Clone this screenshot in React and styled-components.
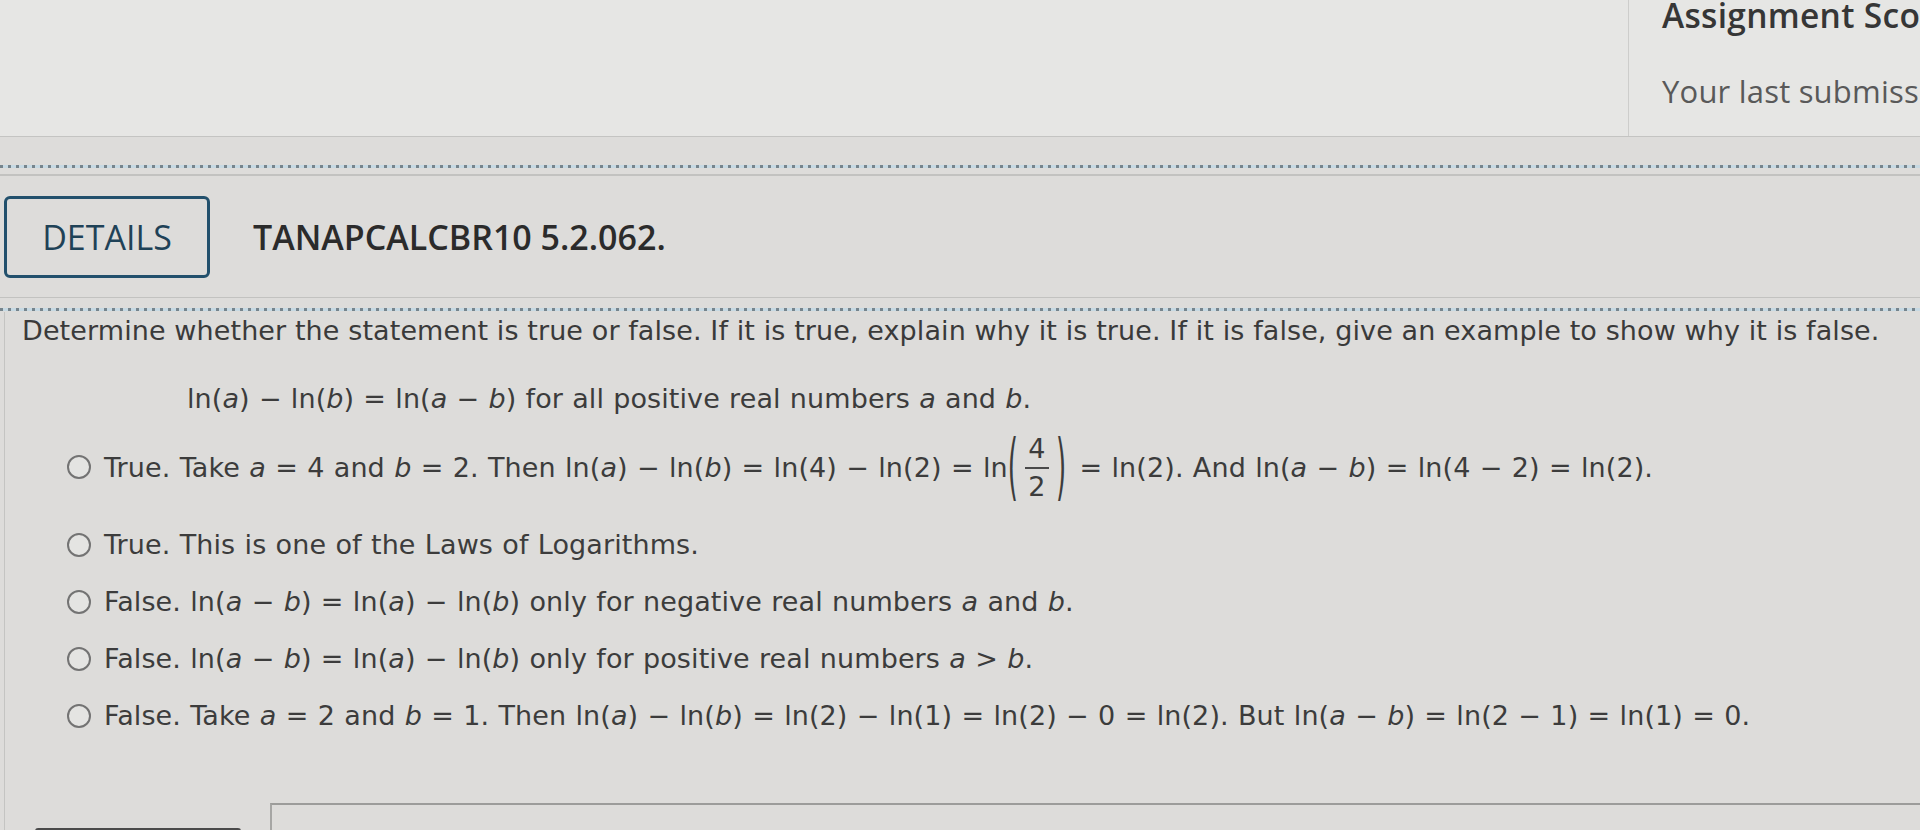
import React from 'react';
import styled, { createGlobalStyle } from 'styled-components';

const GlobalStyle = createGlobalStyle`
  html, body {
    margin: 0;
    padding: 0;
  }
  body {
    width: 1920px;
    height: 830px;
    overflow: hidden;
    background: #dddcda;
    font-family: "DejaVu Sans", Verdana, sans-serif;
    color: #3c3c3c;
  }
`;

const TopBar = styled.header`
    display: flex;
    height: 137px;
    box-sizing: border-box;
    background: #e6e6e4;
    border-bottom: 1px solid #c4c4c2;
`;

const TopLeft = styled.div`
    flex: 0 0 1628px;
    border-right: 1px solid #cdcdcb;
`;

/* the score panel runs past the right edge of the window, as in the page */
const ScorePanel = styled.div`
    flex: 1;
    min-width: 0;
    padding-left: 33px;
    white-space: nowrap;
    overflow: hidden;
    font-family: "Open Sans", "Noto Sans", sans-serif;
`;

const ScoreTitle = styled.div`
    font-size: 33.5px;
    line-height: 30px;
    font-weight: 600;
    letter-spacing: 0.3px;
    color: #363636;
`;

const ScoreNote = styled.div`
    margin-top: 46px;
    font-size: 31px;
    line-height: 30px;
    letter-spacing: 0.2px;
    color: #595959;
`;

const Dots = styled.div`
    height: 3px;
    margin-top: ${p => p.$top || 0}px;
    background: repeating-linear-gradient(90deg, #76848c 0 3px, #c6d9e3 3px 8px);
`;

const HeaderBand = styled.div`
    display: flex;
    align-items: center;
    gap: 43px;
    height: 121px;
    margin-top: 6px;
    padding-left: 4px;
    border-top: 2px solid #c2c2c0;
    border-bottom: 1px solid #c2c2c0;
    font-family: "Open Sans", "Noto Sans", sans-serif;
`;

const DetailsButton = styled.div`
    display: flex;
    align-items: center;
    justify-content: center;
    width: 206px;
    height: 82px;
    box-sizing: border-box;
    border: 3px solid #22506c;
    border-radius: 6px;
    font-size: 34px;
    color: #1f4257;
`;

const ProblemId = styled.div`
    font-size: 34px;
    font-weight: 600;
    color: #2b2b2b;
`;

const Content = styled.section`
    margin-left: 4px;
    padding-left: 17px;
    border-left: 1px solid #c4c4c2;
    font-size: 27px;
    letter-spacing: 0.1px;
`;

const Question = styled.p`
    margin: 1px 0 0;
    line-height: 38px;
    color: #3a3a3a;
`;

const Statement = styled.p`
    margin: 30px 0 0;
    padding-left: 165px;
    line-height: 38px;
    word-spacing: 0.5px;
`;

const Options = styled.div`
    display: flex;
    flex-direction: column;
    padding-left: 45px;
    word-spacing: 0.6px;
`;

const Option = styled.label`
    display: flex;
    align-items: center;
    gap: 13px;
    height: ${p => (p.$tall ? 98 : 57)}px;
`;

const Radio = styled.span`
    flex: 0 0 auto;
    width: 24px;
    height: 24px;
    box-sizing: border-box;
    border: 2px solid #737373;
    border-radius: 50%;
    background: #e4e4e2;
`;

const OptionText = styled.span`
    display: inline-flex;
    align-items: center;
    white-space: pre;
`;

const V = styled.i`
    font-style: italic;
`;

const Paren = styled.span`
    display: inline-block;
    font-size: 26px;
    transform: scale(1, 2.8);
    margin: ${p => (p.$open ? '0 4px 0 0' : '0 4px')};
`;

const Frac = styled.span`
    display: inline-flex;
    flex-direction: column;
    align-items: center;
    font-size: 27px;
    line-height: 29px;
    margin: 0 3px;
`;

const FracBar = styled.span`
    width: 24px;
    height: 2px;
    margin: 4px 0 3px;
    background: #4a4a4a;
`;

const BottomRow = styled.div`
    display: flex;
    align-items: flex-start;
    margin-top: 59px;
`;

const NextButton = styled.div`
    width: 206px;
    height: 20px;
    margin: 25px 0 0 13px;
    box-sizing: border-box;
    border: 2px solid #4a4a4a;
    border-bottom: none;
    border-radius: 3px 3px 0 0;
`;

const AnswerBox = styled.div`
    flex: 1;
    height: 40px;
    margin-left: 29px;
    border-top: 2px solid #9c9c9a;
    border-left: 2px solid #a6a6a4;
`;

const ln = (inner) => <>ln({inner})</>;

export default function App() {
    return (
        <>
            <GlobalStyle />
            <TopBar>
                <TopLeft />
                <ScorePanel>
                    <ScoreTitle>Assignment Score</ScoreTitle>
                    <ScoreNote>Your last submission is used for your score.</ScoreNote>
                </ScorePanel>
            </TopBar>
            <Dots $top={28} />
            <HeaderBand>
                <DetailsButton>DETAILS</DetailsButton>
                <ProblemId>TANAPCALCBR10 5.2.062.</ProblemId>
            </HeaderBand>
            <Dots $top={10} />
            <Content>
                <Question>
                    Determine whether the statement is true or false. If it is true, explain why it is true. If it is false, give an example to show why it is false.
                </Question>
                <Statement>
                    {ln(<V>a</V>)} − {ln(<V>b</V>)} = ln(<V>a</V> − <V>b</V>) for all positive real numbers <V>a</V> and <V>b</V>.
                </Statement>
                <Options>
                    <Option $tall>
                        <Radio />
                        <OptionText>
                            True. Take <V>a</V> = 4 and <V>b</V> = 2. Then {ln(<V>a</V>)} − {ln(<V>b</V>)} = ln(4) − ln(2) = ln
                            <Paren $open>(</Paren>
                            <Frac>
                                <span>4</span>
                                <FracBar />
                                <span>2</span>
                            </Frac>
                            <Paren>)</Paren> = ln(2). And ln(<V>a</V> − <V>b</V>) = ln(4 − 2) = ln(2).
                        </OptionText>
                    </Option>
                    <Option>
                        <Radio />
                        <OptionText>True. This is one of the Laws of Logarithms.</OptionText>
                    </Option>
                    <Option>
                        <Radio />
                        <OptionText>
                            False. ln(<V>a</V> − <V>b</V>) = {ln(<V>a</V>)} − {ln(<V>b</V>)} only for negative real numbers <V>a</V> and <V>b</V>.
                        </OptionText>
                    </Option>
                    <Option>
                        <Radio />
                        <OptionText>
                            False. ln(<V>a</V> − <V>b</V>) = {ln(<V>a</V>)} − {ln(<V>b</V>)} only for positive real numbers <V>a</V> &gt; <V>b</V>.
                        </OptionText>
                    </Option>
                    <Option>
                        <Radio />
                        <OptionText>
                            False. Take <V>a</V> = 2 and <V>b</V> = 1. Then {ln(<V>a</V>)} − {ln(<V>b</V>)} = ln(2) − ln(1) = ln(2) − 0 = ln(2). But ln(<V>a</V> − <V>b</V>) = ln(2 − 1) = ln(1) = 0.
                        </OptionText>
                    </Option>
                </Options>
                <BottomRow>
                    <NextButton />
                    <AnswerBox />
                </BottomRow>
            </Content>
        </>
    );
}
